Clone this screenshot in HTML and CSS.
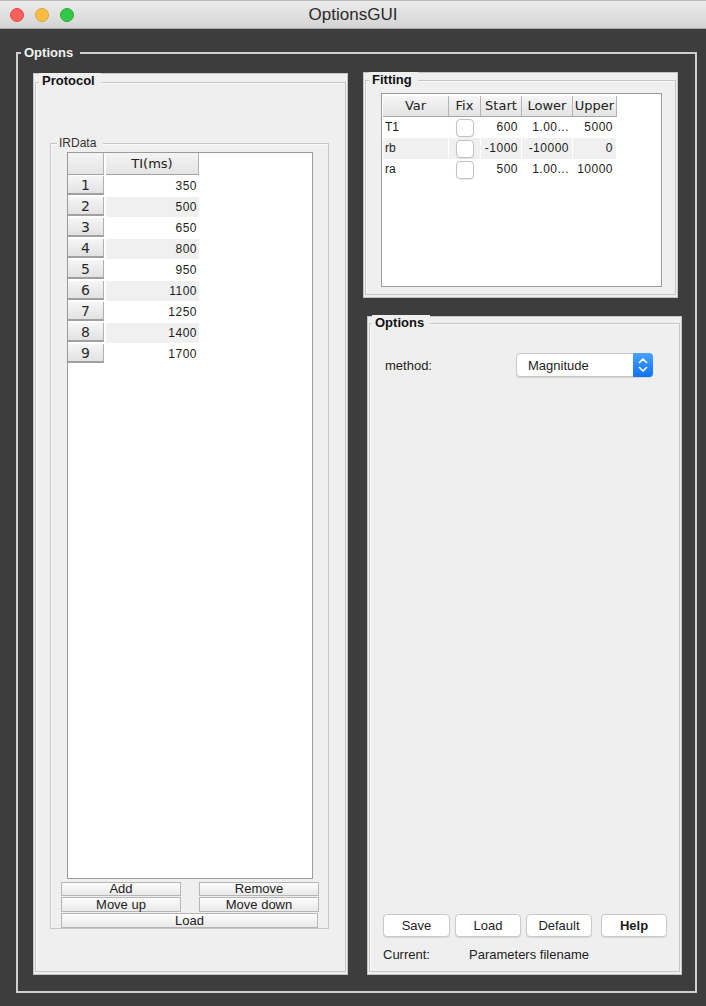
FILE: index.html
```html
<!DOCTYPE html>
<html>
<head>
<meta charset="utf-8">
<title>OptionsGUI</title>
<link rel="stylesheet" href="styles.css">
</head>
<body>
<div class="titlebar">
  <div class="lights">
    <span class="light red"></span>
    <span class="light yellow"></span>
    <span class="light green"></span>
  </div>
  <div class="title">OptionsGUI</div>
  <div></div>
</div>

<div class="frame">
  <span class="frame-legend">Options</span>
  <div class="frame-grid">
    <div class="panel protocol">
      <div class="group protocol-group">
        <span class="legend">Protocol</span>
        <div class="irdata">
          <span class="legend small">IRData</span>
          <div class="irtable">
            <div class="ir-head"><div class="hcell"></div><div class="hcell">TI(ms)</div></div>
            <div class="ir-row"><div class="rowhdr">1</div><div class="val">350</div></div>
            <div class="ir-row alt"><div class="rowhdr">2</div><div class="val">500</div></div>
            <div class="ir-row"><div class="rowhdr">3</div><div class="val">650</div></div>
            <div class="ir-row alt"><div class="rowhdr">4</div><div class="val">800</div></div>
            <div class="ir-row"><div class="rowhdr">5</div><div class="val">950</div></div>
            <div class="ir-row alt"><div class="rowhdr">6</div><div class="val">1100</div></div>
            <div class="ir-row"><div class="rowhdr">7</div><div class="val">1250</div></div>
            <div class="ir-row alt"><div class="rowhdr">8</div><div class="val">1400</div></div>
            <div class="ir-row"><div class="rowhdr">9</div><div class="val">1700</div></div>
          </div>
          <div class="ir-buttons">
            <button class="flat">Add</button>
            <button class="flat">Remove</button>
            <button class="flat">Move up</button>
            <button class="flat">Move down</button>
            <button class="flat load">Load</button>
          </div>
        </div>
      </div>
    </div>

    <div class="rightcol">
      <div class="panel fitting">
        <div class="group fitting-group">
          <span class="legend">Fitting</span>
          <div class="ftable">
            <div class="frow head">
              <div class="fh">Var</div><div class="fh">Fix</div><div class="fh">Start</div><div class="fh">Lower</div><div class="fh">Upper</div>
            </div>
            <div class="frow">
              <div class="fc left">T1</div><div class="fc chk"><span class="box"></span></div><div class="fc">600</div><div class="fc">1.00...</div><div class="fc">5000</div>
            </div>
            <div class="frow alt">
              <div class="fc left">rb</div><div class="fc chk"><span class="box"></span></div><div class="fc">-1000</div><div class="fc">-10000</div><div class="fc">0</div>
            </div>
            <div class="frow">
              <div class="fc left">ra</div><div class="fc chk"><span class="box"></span></div><div class="fc">500</div><div class="fc">1.00...</div><div class="fc">10000</div>
            </div>
          </div>
        </div>
      </div>

      <div class="panel options">
        <div class="group options-group">
          <span class="legend">Options</span>
          <div class="method-row">
            <span class="method-label">method:</span>
            <div class="popup">
              <span class="popup-text">Magnitude</span>
              <span class="stepper">
                <svg width="20" height="24" viewBox="0 0 20 24"><path d="M6.5 9.5 L10 6 L13.5 9.5" fill="none" stroke="#fff" stroke-width="1.6" stroke-linecap="round" stroke-linejoin="round"/><path d="M6.5 14.5 L10 18 L13.5 14.5" fill="none" stroke="#fff" stroke-width="1.6" stroke-linecap="round" stroke-linejoin="round"/></svg>
              </span>
            </div>
          </div>
          <div class="spacer"></div>
          <div class="mac-buttons">
            <button class="mac save">Save</button>
            <button class="mac">Load</button>
            <button class="mac">Default</button>
            <button class="mac help">Help</button>
          </div>
          <div class="current-row">
            <span class="current-label">Current:</span>
            <span>Parameters filename</span>
          </div>
        </div>
      </div>
    </div>
  </div>
</div>
</body>
</html>
```

FILE: styles.css
```css
* { box-sizing: border-box; }

body {
  margin: 0;
  width: 706px;
  height: 1006px;
  overflow: hidden;
  background: #3d3d3d;
  font-family: "Liberation Sans", Arial, sans-serif;
  color: #1d1d1d;
  display: flex;
  flex-direction: column;
}

/* title bar */
.titlebar {
  height: 29px;
  flex: none;
  background: linear-gradient(#ececec, #d4d4d4);
  border-top: 1px solid #b8b8b8;
  border-bottom: 1px solid #a8a8a8;
  display: grid;
  grid-template-columns: 1fr auto 1fr;
  align-items: center;
}
.lights {
  display: flex;
  gap: 11px;
  padding-left: 10px;
}
.light {
  width: 14px;
  height: 14px;
  border-radius: 50%;
}
.red { background: #fc605c; border: 1px solid #de4a45; }
.yellow { background: #fdbc40; border: 1px solid #dea236; }
.green { background: #34c84a; border: 1px solid #27aa35; }
.title {
  font-size: 17px;
  color: #2a2a2a;
  padding-top: 1px;
}

/* outer frame */
.frame {
  position: relative;
  flex: 1;
  margin: 23px 9px 13px 16px;
  border: 2px solid #cfcfcf;
  padding: 18px 13px 16px 15px;
}
.frame-legend {
  position: absolute;
  top: -9px;
  left: 3px;
  padding: 0 7px 0 3px;
  background: #3d3d3d;
  color: #f2f2f2;
  font-weight: bold;
  font-size: 13px;
  line-height: 16px;
}
.frame-grid {
  display: grid;
  grid-template-columns: 315px 319px;
  column-gap: 15px;
  height: 100%;
}

/* panels & groups */
.panel {
  background: #efefef;
  border: 1px solid #c4c4c4;
  display: flex;
}
.group {
  position: relative;
  flex: 1;
  border: 1px solid #c6c6c6;
  box-shadow: inset 1px 1px 0 #fafafa;
  display: flex;
  flex-direction: column;
}
.legend {
  position: absolute;
  top: -10px;
  left: 3px;
  padding: 0 6px 0 3px;
  background: #efefef;
  font-weight: bold;
  font-size: 13px;
  line-height: 16px;
  color: #111;
}
.legend.small {
  font-weight: normal;
  font-size: 12px;
  color: #333;
  top: -9px;
  left: 6px;
  padding: 0 7px 0 2px;
}

/* protocol */
.protocol {
  margin-top: 1px;
  padding: 8px 1px 2px 1px;
}
.protocol-group {
  padding: 60px 16px 42px 14px;
}
.irdata {
  position: relative;
  flex: 1;
  border: 1px solid #c6c6c6;
  box-shadow: inset 1px 1px 0 #fafafa;
  padding: 8px 9px 0 10px;
  display: flex;
  flex-direction: column;
}
.irtable {
  flex: 1;
  margin: 0 6px;
  background: #fff;
  border: 1px solid #9a9a9a;
}
.ir-head {
  display: grid;
  grid-template-columns: 36px 93px;
  column-gap: 2px;
  height: 23px;
  padding-bottom: 1px;
}
.hcell {
  background: linear-gradient(#f4f4f4, #e4e4e4);
  border-right: 1px solid #b2b2b2;
  border-bottom: 1px solid #a4a4a4;
  font-family: "DejaVu Sans", sans-serif;
  font-size: 13px;
  line-height: 21px;
  text-align: center;
  color: #222;
}
.ir-row {
  display: grid;
  grid-template-columns: 36px 93px;
  column-gap: 2px;
  height: 21px;
}
.rowhdr {
  height: 19px;
  background: linear-gradient(#f6f6f6, #e2e2e2);
  border-right: 1px solid #b0b0b0;
  border-bottom: 2px solid #a0a0a0;
  font-family: "DejaVu Sans", sans-serif;
  font-weight: 400;
  font-size: 14px;
  line-height: 19px;
  text-align: center;
  color: #2a2a2a;
}
.val {
  height: 20px;
  font-size: 12px;
  letter-spacing: 0.5px;
  line-height: 21px;
  text-align: right;
  padding-right: 2px;
}
.ir-row.alt .val { background: #f0f0f0; }

.ir-buttons {
  margin-top: 3px;
  display: grid;
  grid-template-columns: 120px 120px;
  grid-template-rows: 14px 15px 15px;
  column-gap: 18px;
  row-gap: 1px;
}
.flat {
  margin: 0;
  padding: 0;
  border: 1px solid #b6b6b6;
  background: linear-gradient(#fcfcfc, #e9e9e9);
  font-family: "Liberation Sans", Arial, sans-serif;
  font-weight: 400;
  font-size: 13px;
  line-height: 12px;
  color: #222;
}
.flat.load {
  grid-column: 1 / -1;
  width: 257px;
}

/* right column */
.rightcol {
  display: flex;
  flex-direction: column;
}
.fitting {
  height: 226px;
  flex: none;
  margin-right: 4px;
  padding: 7px 1px 2px 1px;
}
.fitting-group {
  padding: 12px 13px 7px 15px;
}
.fitting-group .legend { top: -9px; }
.ftable {
  flex: 1;
  background: #fff;
  border: 1px solid #9a9a9a;
  padding: 2px 1px;
}
.frow {
  display: grid;
  grid-template-columns: 66px 32px 41px 51px 44px;
  height: 21px;
}
.fh {
  background: linear-gradient(#f6f6f6, #e3e3e3);
  border-right: 1px solid #b4b4b4;
  border-bottom: 1px solid #a6a6a6;
  font-family: "DejaVu Sans", sans-serif;
  font-size: 13px;
  line-height: 20px;
  text-align: center;
  color: #222;
}
.fc {
  font-size: 12px;
  letter-spacing: 0.5px;
  line-height: 21px;
  text-align: right;
  padding-right: 3px;
  border-right: 1px solid #fff;
  white-space: nowrap;
  overflow: hidden;
}
.fc.left {
  text-align: left;
  padding-left: 2px;
  letter-spacing: 0;
}
.frow.alt .fc { background: #f0f0f0; }
.fc.chk {
  display: flex;
  justify-content: center;
  align-items: center;
  padding: 0;
}
.box {
  width: 18px;
  height: 18px;
  background: #fff;
  border: 1px solid #c2c2c2;
  border-radius: 4px;
  box-shadow: 0 1px 1px rgba(0, 0, 0, 0.08);
}

.options {
  flex: 1;
  margin-left: 4px;
  margin-top: 18px;
  padding: 6px 1px 2px 1px;
}
.options-group .legend {
  top: -9px;
  left: 2px;
}
.options-group {
  padding: 0 0 8px 0;
}
.method-row {
  margin-top: 29px;
  padding-left: 15px;
  display: flex;
  align-items: center;
  font-size: 13px;
}
.method-label {
  width: 131px;
}
.popup {
  width: 137px;
  height: 24px;
  background: #fff;
  border: 1px solid #c8c8c8;
  border-radius: 4px;
  box-shadow: 0 1px 1px rgba(0, 0, 0, 0.12);
  display: flex;
  align-items: stretch;
}
.popup-text {
  flex: 1;
  padding-left: 11px;
  line-height: 23px;
  font-size: 13px;
}
.stepper {
  width: 20px;
  margin: -1px -1px -1px 0;
  background: linear-gradient(#4aa2fd, #0f72f7);
  border-radius: 0 4px 4px 0;
  display: flex;
  align-items: center;
  justify-content: center;
}
.stepper svg { display: block; }

.spacer { flex: 1; }

.mac-buttons {
  display: flex;
  padding-left: 13px;
  gap: 5px;
}
.mac {
  margin: 0;
  padding: 0;
  width: 66px;
  height: 23px;
  background: #fff;
  border: 1px solid #c9c9c9;
  border-radius: 4px;
  box-shadow: 0 1px 1px rgba(0, 0, 0, 0.1);
  font-family: "Liberation Sans", Arial, sans-serif;
  font-weight: 400;
  font-size: 13px;
  color: #1d1d1d;
}
.mac.save { width: 67px; }
.mac.help {
  font-weight: bold;
  margin-left: 4px;
}
.current-row {
  margin-top: 9px;
  padding-left: 13px;
  height: 17px;
  line-height: 17px;
  font-size: 13px;
  display: flex;
}
.current-label {
  width: 86px;
}
```
